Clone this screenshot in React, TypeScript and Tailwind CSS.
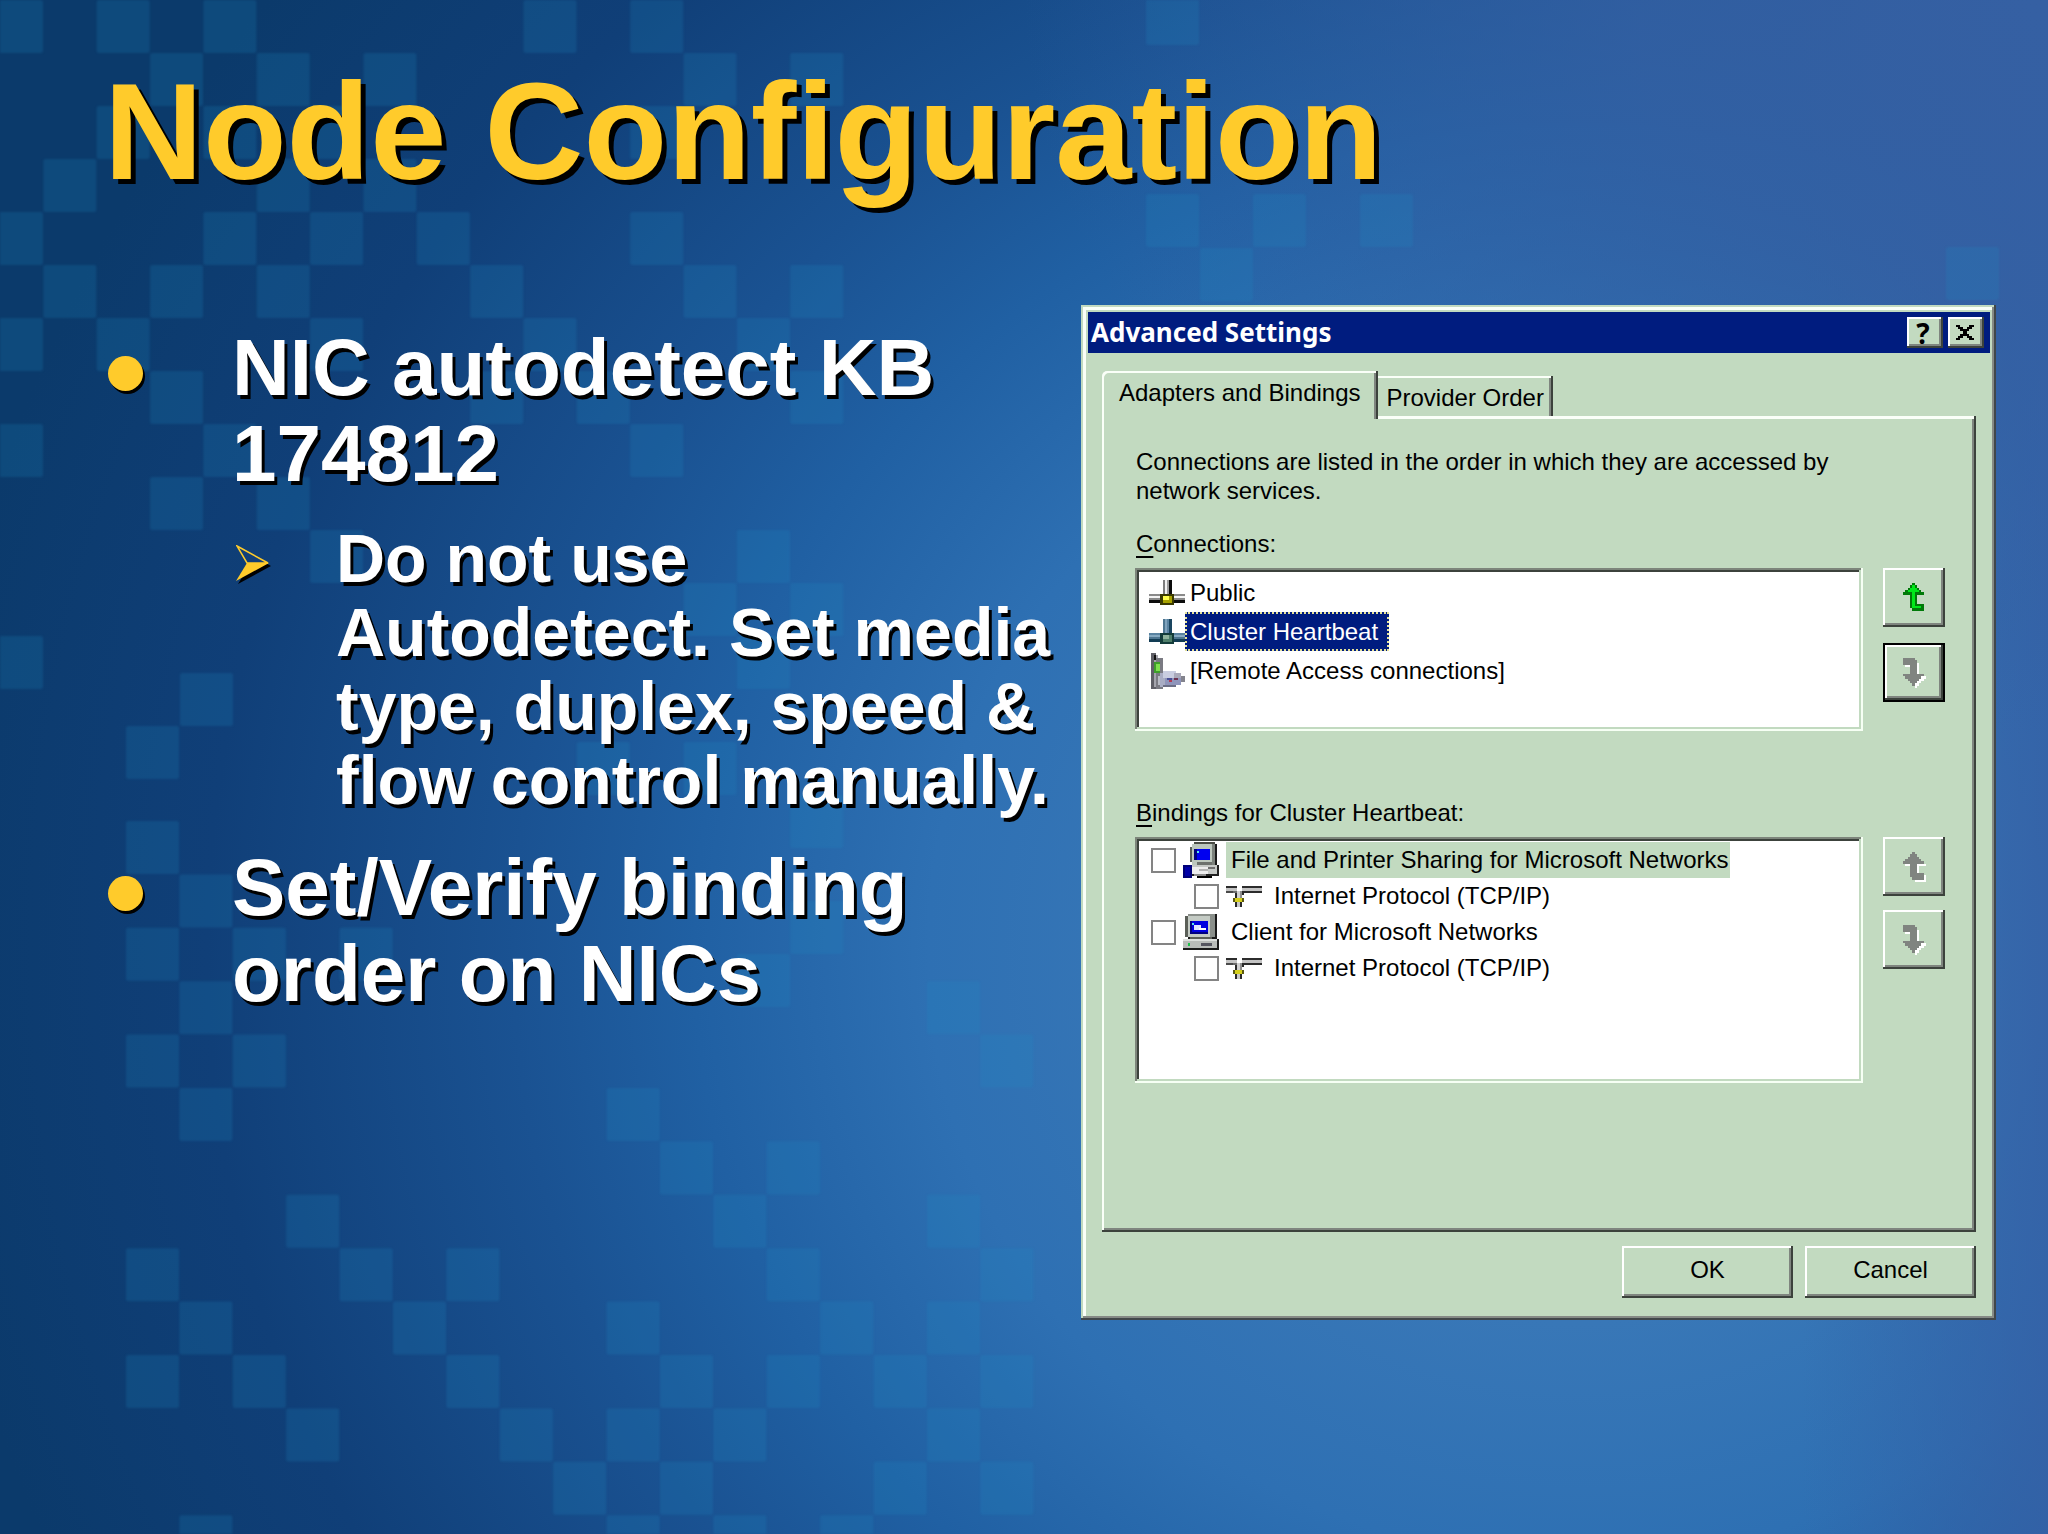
import React from "react";

/* ---------- backdrop ---------- */

const upperCells: number[][] = [
  [0, 2, 4, 10, 12],
  [3, 5, 7, 13, 15],
  [2, 4, 6, 12],
  [1, 5, 7],
  [0, 4, 6, 8, 12],
  [1, 3, 5, 9, 13, 15],
  [0, 2, 6, 10, 14],
  [3, 9, 11, 15],
  [0, 4, 12],
  [3, 5],
  [6, 14],
  [13, 15],
  [0, 14],
  [],
  [11, 13],
  [15],
  [],
  [15],
  [14],
];

const lowerCells: number[][] = [
  [0],
  [1],
  [0, 2, 4],
  [1, 15],
  [0, 2, 16],
  [1, 9],
  [10, 12],
  [3, 11, 15],
  [0, 4, 6, 12, 16],
  [1, 5, 9, 13, 15],
  [0, 2, 6, 10, 12, 14, 16],
  [3, 7, 9, 11, 15],
  [8, 10, 14, 16],
  [1, 9, 11, 13],
];

const looseCells = [
  [1146, -8],
  [1146, 194],
  [1253, 194],
  [1360, 194],
  [1200, 248],
  [1946, 247],
  [180, 673],
  [126, 726],
];

function Backdrop() {
  return (
    <svg
      aria-hidden="true"
      className="absolute inset-0 h-full w-full blur-[1px]"
      viewBox="0 0 2048 1534"
      preserveAspectRatio="xMinYMin slice"
      fill="#1e8cc4"
      fillOpacity="0.2"
    >
      {upperCells.map((cols, r) =>
        cols.map((c) => <rect key={`u${r}-${c}`} x={-10 + c * 53.35} y={r * 53} width="53" height="53" rx="2" />),
      )}
      {lowerCells.map((cols, r) =>
        cols.map((c) => (
          <rect key={`l${r}-${c}`} x={126 + c * 53.4} y={821 + r * 53.4} width="53" height="53" rx="2" />
        )),
      )}
      {looseCells.map(([x, y]) => (
        <rect key={`f${x}-${y}`} x={x} y={y} width="53" height="53" rx="2" />
      ))}
    </svg>
  );
}

/* ---------- pixel icons ---------- */

type Px = [number, number, number, number, string];

function Pixels({ w, h, px, className }: { w: number; h: number; px: Px[]; className: string }) {
  return (
    <svg aria-hidden="true" viewBox={`0 0 ${w} ${h}`} className={className} preserveAspectRatio="none">
      {px.map(([x, y, pw, ph, f], i) => (
        <rect key={i} x={x} y={y} width={pw} height={ph} fill={f} shapeRendering="crispEdges" />
      ))}
    </svg>
  );
}

const lanYellow: Px[] = [
  [6, 0, 1, 6, "#7d7d7d"],
  [7, 0, 1, 6, "#f2f2f2"],
  [8, 0, 1, 6, "#9c9c9c"],
  [9, 0, 1, 6, "#0c0c0c"],
  [0, 6, 16, 1, "#8a8a8a"],
  [0, 7, 16, 1, "#f4f4f4"],
  [0, 8, 16, 1, "#8a8a8a"],
  [0, 9, 16, 1, "#0c0c0c"],
  [5, 6, 6, 5, "#3b3a00"],
  [6, 7, 4, 3, "#a8a300"],
  [6, 7, 3, 2, "#ffff4a"],
];

const lanBlue: Px[] = [
  [6, 0, 1, 6, "#4d7590"],
  [7, 0, 1, 6, "#7fa3bd"],
  [8, 0, 1, 6, "#5a83a1"],
  [9, 0, 1, 6, "#1a4560"],
  [0, 6, 16, 1, "#5a83a1"],
  [0, 7, 16, 1, "#86aac2"],
  [0, 8, 16, 1, "#4d7590"],
  [0, 9, 16, 1, "#123c54"],
  [5, 6, 6, 5, "#143c3a"],
  [6, 7, 4, 3, "#4f7f6b"],
  [6, 7, 3, 2, "#8fb39b"],
];

const remotePhone: Px[] = [
  [1, 0, 2, 16, "#5f5f66"],
  [2, 1, 2, 14, "#a5a5ad"],
  [3, 2, 3, 13, "#7a7a82"],
  [2, 1, 1, 2, "#111111"],
  [2, 4, 3, 5, "#3f9e2c"],
  [3, 5, 2, 3, "#7fe24d"],
  [4, 10, 2, 4, "#b9bcc6"],
  [3, 14, 3, 2, "#7a7a82"],
  [5, 9, 6, 6, "#a9adc4"],
  [6, 8, 6, 3, "#c9cde0"],
  [7, 11, 7, 3, "#8f95bb"],
  [11, 9, 3, 2, "#a9a9ba"],
  [14, 10, 2, 3, "#83838d"],
  [8, 11, 2, 1, "#4a4f96"],
  [9, 12, 1, 1, "#b23a55"],
  [11, 11, 2, 1, "#6d3352"],
  [6, 14, 6, 1, "#6c6f86"],
];

const sharingPc: Px[] = [
  [5, 0, 9, 1, "#4a4d45"],
  [4, 1, 11, 10, "#1a1a1a"],
  [3, 2, 1, 7, "#5b5f58"],
  [4, 1, 10, 9, "#bcc7bd"],
  [13, 1, 1, 9, "#7c827c"],
  [5, 3, 7, 5, "#000080"],
  [6, 3, 6, 5, "#0000f0"],
  [6, 4, 1, 1, "#58e8e8"],
  [6, 9, 7, 1, "#6d716d"],
  [4, 10, 12, 5, "#202020"],
  [4, 10, 11, 4, "#c6c9c6"],
  [11, 11, 3, 1, "#6f6f6f"],
  [0, 10, 4, 6, "#000078"],
  [1, 11, 2, 4, "#0000a8"],
  [4, 11, 7, 3, "#ededed"],
  [7, 12, 4, 1, "#b3b3b3"],
  [5, 14, 5, 1, "#8a8a8a"],
  [6, 15, 7, 1, "#000000"],
];

const clientPc: Px[] = [
  [2, 0, 13, 11, "#1a1a1a"],
  [1, 1, 1, 9, "#5b5f58"],
  [2, 0, 12, 1, "#8a8f8a"],
  [2, 1, 11, 9, "#c4cbc4"],
  [12, 1, 2, 9, "#8a8f8a"],
  [3, 3, 8, 6, "#000080"],
  [4, 3, 7, 5, "#0000e0"],
  [4, 4, 1, 1, "#58e8e8"],
  [5, 5, 3, 2, "#dfe6ff"],
  [7, 6, 3, 1, "#ffffff"],
  [3, 10, 10, 1, "#5b5f58"],
  [0, 11, 16, 5, "#1a1a1a"],
  [0, 11, 15, 4, "#b9bcb9"],
  [0, 11, 15, 1, "#dcdfdc"],
  [2, 13, 1, 1, "#1fc04a"],
  [8, 13, 5, 1, "#55555f"],
];

const protocol: Px[] = [
  [0, 0, 5, 1, "#2c2c2c"],
  [0, 1, 5, 1, "#c4c4c4"],
  [0, 2, 4, 1, "#4a4a4a"],
  [7, 0, 9, 1, "#2c2c2c"],
  [7, 1, 9, 1, "#c4c4c4"],
  [8, 2, 8, 1, "#2c2c2c"],
  [3, 2, 2, 1, "#6b6b6b"],
  [4, 3, 1, 2, "#2a2a2a"],
  [5, 2, 1, 3, "#d0d0d0"],
  [6, 2, 1, 3, "#8d8d8d"],
  [7, 2, 1, 2, "#2a2a2a"],
  [3, 5, 5, 2, "#5c5a10"],
  [4, 5, 3, 2, "#d4cf1c"],
  [4, 7, 1, 2, "#2a2a2a"],
  [5, 7, 1, 2, "#c8c8c8"],
  [6, 7, 1, 2, "#2a2a2a"],
];

const UP = "M4 0h1v1h1v1h1v1h1v1h1v1H6v4h3v3H4v-1H3V5H0V4h1V3h1V2h1V1h1z";
const UP_CORE = "M4 1h1v1h1v1h1v1H5v6h3v1H4V4H2V3h1V2h1z";
const DOWN = "M0 0h5v1h1v6h3v1h-1v1h-1v1h-1v1h-1v1h-1v-1h-1v-1h-1v-1h-1v-1H0V7h3V3H0z";

function Arrow({ dir, off }: { dir: "up" | "down"; off?: boolean }) {
  const d = dir === "up" ? UP : DOWN;
  return (
    <svg aria-hidden="true" viewBox="0 0 10 13" className="h-[30px] w-[23px]" shapeRendering="crispEdges">
      {off ? (
        <>
          <path d={d} fill="#ffffff" transform="translate(1 1)" />
          <path d={d} fill="#808480" />
        </>
      ) : (
        <>
          <path d={d} fill="#007a08" />
          <path d={UP_CORE} fill="#00e81a" />
        </>
      )}
    </svg>
  );
}

/* ---------- dialog parts ---------- */

const raised =
  "bg-[#c2dac0] shadow-[inset_-2px_-2px_0_#3c423c,inset_2px_2px_0_#ffffff,inset_-4px_-4px_0_#7f857f]";
const sunken =
  "bg-white shadow-[inset_-2px_-2px_0_#f6fff4,inset_2px_2px_0_#7d857b,inset_-4px_-4px_0_#c2dac0,inset_4px_4px_0_#3c423c]";

function MoveButton({ dir, off, focus, label }: { dir: "up" | "down"; off?: boolean; focus?: boolean; label: string }) {
  return (
    <button
      type="button"
      aria-label={label}
      className={
        focus
          ? "flex h-[59px] w-[62px] items-center justify-center border-2 border-black bg-[#c2dac0] shadow-[inset_-2px_-2px_0_#3c423c,inset_2px_2px_0_#ffffff,inset_-4px_-4px_0_#7f857f]"
          : `flex h-[59px] w-[62px] items-center justify-center ${raised}`
      }
    >
      <Arrow dir={dir} off={off} />
    </button>
  );
}

function Binding({
  id,
  text,
  icon,
  child,
  active,
}: {
  id: string;
  text: string;
  icon: React.ReactNode;
  child?: boolean;
  active?: boolean;
}) {
  return (
    <li className={child ? "flex h-9 items-center gap-[7px] pl-[54px]" : "flex h-9 items-center gap-[7px] pl-[11px]"}>
      <input
        id={id}
        type="checkbox"
        className="h-[25px] w-[25px] shrink-0 appearance-none border-2 border-[#848484] bg-white"
      />
      {icon}
      <label
        htmlFor={id}
        className={active ? "h-9 bg-[#c2dac0] pr-px pl-[5px] leading-9" : "h-9 px-[5px] leading-9"}
      >
        {text}
      </label>
    </li>
  );
}

function Dialog() {
  return (
    <section
      aria-labelledby="dialog-title"
      className="bg-[#c2dac0] p-[7px] pr-[6px] pb-[5px] font-['Liberation_Sans',Arial,sans-serif] text-2xl text-black shadow-[inset_-2px_-2px_0_#41474a,inset_2px_2px_0_#c2dac0,inset_-4px_-4px_0_#858a85,inset_5px_5px_0_#fafff8]"
    >
      <header className="flex h-[41px] items-center justify-between bg-[#001c7f] pr-[6px] pl-[3px]">
        <h2
          id="dialog-title"
          className="font-['Noto_Sans','Open_Sans',sans-serif] text-[26px] leading-[41px] font-bold text-white"
        >
          Advanced Settings
        </h2>
        <div className="flex gap-[5px]">
          <button
            type="button"
            aria-label="Help"
            className={`h-[31px] w-9 pr-1 font-['Noto_Sans',sans-serif] text-[28px] leading-[30px] font-bold ${raised}`}
          >
            ?
          </button>
          <button
            type="button"
            aria-label="Close"
            className={`flex h-[31px] w-9 items-center justify-center ${raised}`}
          >
            <svg aria-hidden="true" viewBox="0 0 9 7" className="h-[17px] w-[20px]" shapeRendering="crispEdges">
              <path d="M0 0h2v1h1v1h2V1h1V0h2v1H7v1H6v1H5v1h1v1h1v1h1v1H6V6H5V5H3v1H2v1H0V6h1V5h1V4h1V3H2V2H1V1H0z" />
            </svg>
          </button>
        </div>
      </header>

      <div className="px-[14px] pt-[18px] pb-[17px]">
        <div role="tablist" className="relative z-10 -mb-[3px] flex h-12 items-end">
          <button
            type="button"
            role="tab"
            aria-selected="true"
            className="h-12 rounded-tl-[5px] bg-[#c2dac0] px-[17px] pb-1 whitespace-nowrap shadow-[inset_-2px_0_0_#3c423c,inset_2px_2px_0_#fafff8,inset_-4px_0_0_#7f857f]"
          >
            Adapters and Bindings
          </button>
          <button
            type="button"
            role="tab"
            aria-selected="false"
            className="mb-[3px] h-10 bg-[#c2dac0] pt-1 pr-[9px] pl-[9px] whitespace-nowrap shadow-[inset_-2px_0_0_#3c423c,inset_0_2px_0_#fafff8,inset_-4px_0_0_#7f857f]"
          >
            Provider Order
          </button>
        </div>

        <div
          role="tabpanel"
          className="pt-[31px] pr-[31px] pb-[149px] pl-[33px] shadow-[inset_-2px_-2px_0_#3c423c,inset_2px_3px_0_#fafff8,inset_-4px_-4px_0_#7f857f]"
        >
          <p className="pr-20 pl-px leading-[29px]">
            Connections are listed in the order in which they are accessed by network services.
          </p>

          <h3 id="connections" className="mt-6 pl-px leading-[29px]">
            <span className="underline decoration-2 underline-offset-4">C</span>onnections:
          </h3>
          <div className="mt-[10px] flex gap-5">
            <ul aria-labelledby="connections" className={`h-[163px] flex-1 p-[5px] ${sunken}`}>
              <li className="flex h-[39px] items-center pl-[9px]">
                <Pixels w={16} h={11} px={lanYellow} className="h-[25px] w-9" />
                <span className="px-[5px] leading-[39px]">Public</span>
              </li>
              <li className="flex h-[39px] items-center pl-[9px]">
                <Pixels w={16} h={11} px={lanBlue} className="h-[25px] w-9" />
                <span className="border-2 border-dotted border-[#e6e39a] bg-[#001c7f] pr-[9px] pl-[3px] leading-[35px] text-white">
                  Cluster Heartbeat
                </span>
              </li>
              <li className="flex h-[39px] items-center pl-[9px]">
                <Pixels w={16} h={16} px={remotePhone} className="h-9 w-9" />
                <span className="px-[5px] leading-[39px]">[Remote Access connections]</span>
              </li>
            </ul>
            <div className="flex flex-col gap-4">
              <MoveButton dir="up" label="Move connection up" />
              <MoveButton dir="down" off focus label="Move connection down" />
            </div>
          </div>

          <h3 id="bindings" className="mt-[67px] pl-px leading-[29px]">
            <span className="underline decoration-2 underline-offset-4">B</span>indings for Cluster Heartbeat:
          </h3>
          <div className="mt-[10px] flex gap-5">
            <ul aria-labelledby="bindings" className={`h-[246px] flex-1 p-[5px] ${sunken}`}>
              <Binding
                id="file-sharing"
                active
                text="File and Printer Sharing for Microsoft Networks"
                icon={<Pixels w={16} h={16} px={sharingPc} className="h-9 w-9" />}
              />
              <Binding
                id="file-sharing-tcp"
                child
                text="Internet Protocol (TCP/IP)"
                icon={<Pixels w={16} h={9} px={protocol} className="h-[21px] w-9" />}
              />
              <Binding
                id="client"
                text="Client for Microsoft Networks"
                icon={<Pixels w={16} h={16} px={clientPc} className="h-9 w-9" />}
              />
              <Binding
                id="client-tcp"
                child
                text="Internet Protocol (TCP/IP)"
                icon={<Pixels w={16} h={9} px={protocol} className="h-[21px] w-9" />}
              />
            </ul>
            <div className="flex flex-col gap-[14px]">
              <MoveButton dir="up" off label="Move binding up" />
              <MoveButton dir="down" off label="Move binding down" />
            </div>
          </div>
        </div>

        <div className="mt-[14px] flex justify-end gap-3">
          <button type="button" className={`h-[52px] w-[171px] pb-1 ${raised}`}>
            OK
          </button>
          <button type="button" className={`h-[52px] w-[171px] pb-1 ${raised}`}>
            Cancel
          </button>
        </div>
      </div>
    </section>
  );
}

/* ---------- slide ---------- */

function Bullet({ children }: { children: React.ReactNode }) {
  return (
    <li className="grid grid-cols-[124px_1fr] items-start">
      <span className="mt-[31px] h-[35px] w-[35px] rounded-full bg-[#ffcb2b] shadow-[2px_3px_0_#000]" />
      <div className="text-[80px] leading-[86px]">{children}</div>
    </li>
  );
}

export default function App() {
  return (
    <main className="relative min-h-screen overflow-hidden bg-[radial-gradient(ellipse_50%_48%_at_100%_0%,#3560a3_0%,#3560a3cc_40%,#3560a300_100%),linear-gradient(to_left,#3560a5cc_0%,#3560a500_12%),radial-gradient(ellipse_88%_110%_at_77%_62%,#3c7cbb_0%,#3877b7_22%,#2e70b3_36%,#2060a3_49%,#1a5292_59%,#103f78_76%,#0b3a6b_92%)] pb-16 font-['Liberation_Sans',Arial,sans-serif]">
      <Backdrop />
      <div className="relative">
        <h1 className="pt-[63px] pl-[104px] text-[137px] leading-none font-bold text-[#ffcb2b] [text-shadow:5px_5px_0_#000]">
          Node Configuration
        </h1>
        <div className="mt-[105px] grid grid-cols-[973fr_915fr] items-start pr-[52px] pl-[108px]">
          <ul className="flex flex-col gap-7 pt-5 pr-4 font-bold text-white [text-shadow:3px_4px_0_#000]">
            <Bullet>
              NIC autodetect KB 174812
              <ul className="mt-6">
                <li className="grid grid-cols-[104px_1fr] items-start text-[68px] leading-[74px]">
                  <svg aria-hidden="true" viewBox="0 0 36 40" className="mt-6 ml-1 h-10 w-9">
                    <path d="M2 3 35 21 2 39l11-18z" fill="#000" />
                    <path d="M1 1 32 18H11z" fill="#123f79" stroke="#ffcb2b" strokeWidth="1.5" />
                    <path d="M11 18h22L0 36z" fill="#ffcb2b" />
                  </svg>
                  <p>Do not use Autodetect. Set media type, duplex, speed &amp; flow control manually.</p>
                </li>
              </ul>
            </Bullet>
            <Bullet>Set/Verify binding order on NICs</Bullet>
          </ul>
          <Dialog />
        </div>
      </div>
    </main>
  );
}
